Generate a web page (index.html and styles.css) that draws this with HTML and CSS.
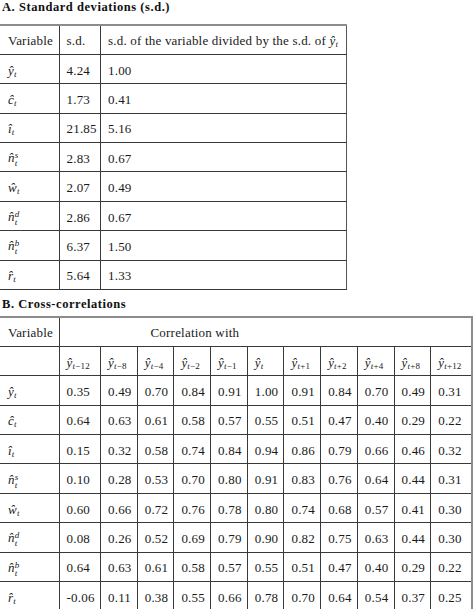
FILE: index.html
```html
<!DOCTYPE html>
<html>
<head>
<meta charset="utf-8">
<link rel="stylesheet" href="styles.css">
</head>
<body>
<h2 class="title">A. Standard deviations (s.d.)</h2>
<table class="tbl tbl-a">
  <colgroup><col class="c-var"><col class="c-sd"><col class="c-rel"></colgroup>
  <tr class="first"><td>Variable</td><td>s.d.</td><td>s.d. of the variable divided by the s.d. of <span class="m"><i>ŷ</i><sub>t</sub></span></td></tr>
  <tr><td><span class="m"><i>ŷ</i><sub>t</sub></span></td><td>4.24</td><td>1.00</td></tr>
  <tr><td><span class="m"><i>ĉ</i><sub>t</sub></span></td><td>1.73</td><td>0.41</td></tr>
  <tr><td><span class="m"><i>î</i><sub>t</sub></span></td><td>21.85</td><td>5.16</td></tr>
  <tr><td><span class="m"><i>n̂</i><span class="ss"><span>s</span><span>t</span></span></span></td><td>2.83</td><td>0.67</td></tr>
  <tr><td><span class="m"><i>ŵ</i><sub>t</sub></span></td><td>2.07</td><td>0.49</td></tr>
  <tr><td><span class="m"><i>n̂</i><span class="ss"><span>d</span><span>t</span></span></span></td><td>2.86</td><td>0.67</td></tr>
  <tr><td><span class="m"><i>n̂</i><span class="ss"><span>b</span><span>t</span></span></span></td><td>6.37</td><td>1.50</td></tr>
  <tr><td><span class="m"><i>r̂</i><sub>t</sub></span></td><td>5.64</td><td>1.33</td></tr>
</table>
<h2 class="title title-b">B. Cross-correlations</h2>
<table class="tbl tbl-b">
  <colgroup><col class="b-var"><col class="b-w"><col class="b-n"><col class="b-n"><col class="b-n"><col class="b-n"><col class="b-n"><col class="b-n"><col class="b-n"><col class="b-n"><col class="b-n"><col class="b-w"></colgroup>
  <tr class="first"><td>Variable</td><td colspan="11" class="corr">Correlation with</td></tr>
  <tr class="lags"><td></td>
    <td><span class="m"><i>ŷ</i><sub><i>t</i>−12</sub></span></td>
    <td><span class="m"><i>ŷ</i><sub><i>t</i>−8</sub></span></td>
    <td><span class="m"><i>ŷ</i><sub><i>t</i>−4</sub></span></td>
    <td><span class="m"><i>ŷ</i><sub><i>t</i>−2</sub></span></td>
    <td><span class="m"><i>ŷ</i><sub><i>t</i>−1</sub></span></td>
    <td><span class="m"><i>ŷ</i><sub><i>t</i></sub></span></td>
    <td><span class="m"><i>ŷ</i><sub><i>t</i>+1</sub></span></td>
    <td><span class="m"><i>ŷ</i><sub><i>t</i>+2</sub></span></td>
    <td><span class="m"><i>ŷ</i><sub><i>t</i>+4</sub></span></td>
    <td><span class="m"><i>ŷ</i><sub><i>t</i>+8</sub></span></td>
    <td><span class="m"><i>ŷ</i><sub><i>t</i>+12</sub></span></td>
  </tr>
  <tr><td><span class="m"><i>ŷ</i><sub>t</sub></span></td><td>0.35</td><td>0.49</td><td>0.70</td><td>0.84</td><td>0.91</td><td>1.00</td><td>0.91</td><td>0.84</td><td>0.70</td><td>0.49</td><td>0.31</td></tr>
  <tr><td><span class="m"><i>ĉ</i><sub>t</sub></span></td><td>0.64</td><td>0.63</td><td>0.61</td><td>0.58</td><td>0.57</td><td>0.55</td><td>0.51</td><td>0.47</td><td>0.40</td><td>0.29</td><td>0.22</td></tr>
  <tr><td><span class="m"><i>î</i><sub>t</sub></span></td><td>0.15</td><td>0.32</td><td>0.58</td><td>0.74</td><td>0.84</td><td>0.94</td><td>0.86</td><td>0.79</td><td>0.66</td><td>0.46</td><td>0.32</td></tr>
  <tr><td><span class="m"><i>n̂</i><span class="ss"><span>s</span><span>t</span></span></span></td><td>0.10</td><td>0.28</td><td>0.53</td><td>0.70</td><td>0.80</td><td>0.91</td><td>0.83</td><td>0.76</td><td>0.64</td><td>0.44</td><td>0.31</td></tr>
  <tr><td><span class="m"><i>ŵ</i><sub>t</sub></span></td><td>0.60</td><td>0.66</td><td>0.72</td><td>0.76</td><td>0.78</td><td>0.80</td><td>0.74</td><td>0.68</td><td>0.57</td><td>0.41</td><td>0.30</td></tr>
  <tr><td><span class="m"><i>n̂</i><span class="ss"><span>d</span><span>t</span></span></span></td><td>0.08</td><td>0.26</td><td>0.52</td><td>0.69</td><td>0.79</td><td>0.90</td><td>0.82</td><td>0.75</td><td>0.63</td><td>0.44</td><td>0.30</td></tr>
  <tr><td><span class="m"><i>n̂</i><span class="ss"><span>b</span><span>t</span></span></span></td><td>0.64</td><td>0.63</td><td>0.61</td><td>0.58</td><td>0.57</td><td>0.55</td><td>0.51</td><td>0.47</td><td>0.40</td><td>0.29</td><td>0.22</td></tr>
  <tr><td><span class="m"><i>r̂</i><sub>t</sub></span></td><td>-0.06</td><td>0.11</td><td>0.38</td><td>0.55</td><td>0.66</td><td>0.78</td><td>0.70</td><td>0.64</td><td>0.54</td><td>0.37</td><td>0.25</td></tr>
</table>
</body>
</html>
```
FILE: styles.css
```css
html, body {
  margin: 0;
  padding: 0;
  background: #fff;
}
body {
  width: 474px;
  font-family: "Liberation Serif", "DejaVu Serif", serif;
  color: #1a1a1a;
  overflow: hidden;
}
.title {
  margin: 0;
  height: 24px;
  padding-left: 2px;
  font-family: "Liberation Serif", "DejaVu Serif", serif;
  font-size: 12.5px;
  font-weight: bold;
  letter-spacing: 0.55px;
  line-height: 14px;
  color: #111;
}
.title-b {
  height: 26px;
  padding-top: 7px;
  box-sizing: border-box;
}
.tbl {
  border-collapse: collapse;
  table-layout: fixed;
  font-family: "Liberation Serif", "DejaVu Serif", serif;
  font-size: 13px;
  letter-spacing: 0.2px;
}
.tbl td {
  border: 1px solid #3a3a3a;
  height: 29.4px;
  padding: 3px 0 0 7px;
  box-sizing: border-box;
  vertical-align: middle;
  white-space: nowrap;
  font-family: "Liberation Serif", "DejaVu Serif", serif;
}
.tbl td:first-child {
  border-left: none;
  padding-left: 8px;
}
.tbl tr.first td {
  border-top: 2px solid #8c8c8c;
}
.tbl-a { width: 346px; }
.tbl-a td:last-child { border-right: 1px solid #555; }
.c-var { width: 59px; }
.c-sd { width: 41.5px; }
.c-rel { width: 245.5px; }
.tbl-b { width: 473px; }
.tbl-b td:last-child { border-right: 2px solid #8c8c8c; }
.b-var { width: 59px; }
.b-w { width: 41.5px; }
.b-n { width: 36.7px; }
.tbl-b td.corr { padding-left: 91px; }
.m {
  white-space: nowrap;
}
.m i {
  font-style: italic;
}
.m sub {
  font-size: 9px;
  vertical-align: -2px;
  line-height: 0;
  font-style: italic;
}
.lags .m sub {
  font-style: normal;
}
.lags .m sub i {
  font-style: italic;
}
.ss {
  display: inline-flex;
  flex-direction: column;
  vertical-align: 4px;
  font-size: 9px;
  line-height: 8px;
  font-style: italic;
}
```
